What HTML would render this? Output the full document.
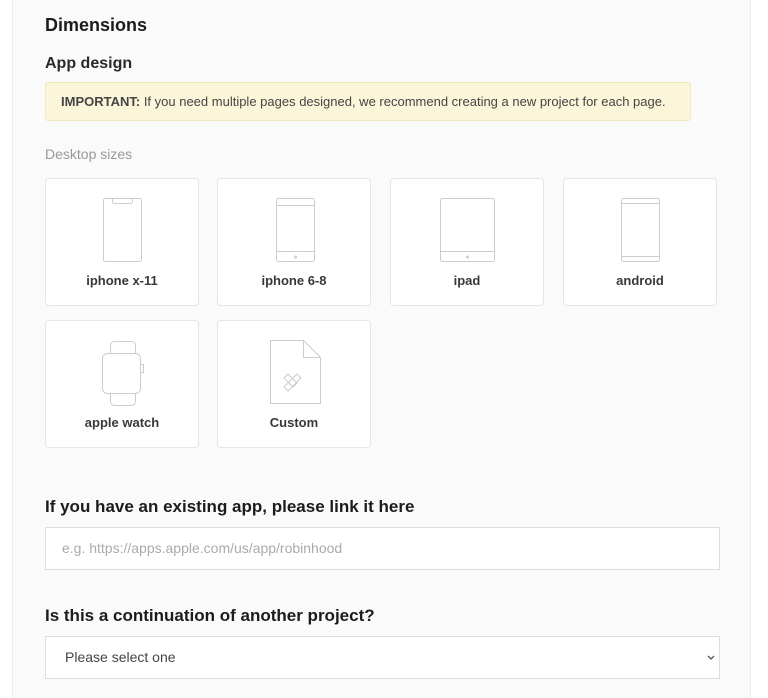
<!DOCTYPE html>
<html><head><style>
body{margin:0;width:768px;height:690px;overflow:hidden;background:#fff;font-family:"Liberation Sans",sans-serif;position:relative}
.wrap{position:absolute;left:12px;top:-2px;width:737px;height:700px;background:#fafafa;border-left:1px solid #ececec;border-right:1px solid #ececec}
.a{position:absolute}
.h1{left:45px;top:15px;font-size:18px;font-weight:bold;color:#1c1c1c}
.h2{left:45px;top:55px;font-size:16px;font-weight:bold;color:#2a2a2a}
.note{left:45px;top:82px;width:646px;height:39px;background:#fbf6d9;border:1px solid #f0e9bd;border-radius:3px;box-sizing:border-box;font-size:13px;color:#444;line-height:37px;padding-left:15px}
.ds{left:45px;top:146px;font-size:14px;color:#999}
.card{position:absolute;width:154px;height:128px;background:#fff;border:1px solid #e6e6e6;border-radius:4px;box-sizing:border-box}
.card .l{position:absolute;left:0;right:0;top:94px;text-align:center;font-size:13px;font-weight:bold;color:#383838}
.card svg{position:absolute;left:0;top:0}
.q{left:45px;font-size:17px;font-weight:bold;color:#1c1c1c}
.in{position:absolute;left:45px;width:675px;height:43px;background:#fff;border:1px solid #dedede;box-sizing:border-box;font-size:14px;line-height:41px}
</style></head><body>
<div class="wrap"></div>
<div class="a h1">Dimensions</div>
<div class="a h2">App design</div>
<div class="a note"><b>IMPORTANT:</b> If you need multiple pages designed, we recommend creating a new project for each page.</div>
<div class="a ds">Desktop sizes</div>

<div class="card" style="left:45px;top:178px"><svg width="153" height="100"><g fill="none" stroke="#ccc" stroke-width="1"><rect x="57.5" y="19.5" width="38" height="63" rx="2"/><path d="M66.5 19.5v3a2 2 0 0 0 2 2h16a2 2 0 0 0 2-2v-3"/></g></svg><div class="l">iphone x-11</div></div>
<div class="card" style="left:217px;top:178px"><svg width="153" height="100"><g fill="none" stroke="#ccc"><rect x="58.5" y="19.5" width="38" height="63" rx="2"/><path d="M58.5 26.5h38M58.5 72.5h38"/></g><circle cx="77.5" cy="78" r="1.5" fill="#ccc"/></svg><div class="l">iphone 6-8</div></div>
<div class="card" style="left:390px;top:178px"><svg width="153" height="100"><g fill="none" stroke="#ccc"><rect x="49.5" y="19.5" width="54" height="63" rx="2"/><path d="M49.5 72.5h54"/></g><circle cx="76.5" cy="78" r="1.5" fill="#ccc"/></svg><div class="l">ipad</div></div>
<div class="card" style="left:563px;top:178px"><svg width="153" height="100"><g fill="none" stroke="#ccc"><rect x="57.5" y="19.5" width="38" height="63" rx="2"/><path d="M57.5 24.5h38M57.5 77.5h38"/></g></svg><div class="l">android</div></div>
<div class="card" style="left:45px;top:320px"><svg width="153" height="100"><g fill="none" stroke="#ccc"><path d="M64.5 32.5v-8a4 4 0 0 1 4-4h17a4 4 0 0 1 4 4v8M64.5 72.5v8a4 4 0 0 0 4 4h17a4 4 0 0 0 4-4v-8"/><rect x="56.5" y="32.5" width="38" height="40" rx="5"/><rect x="94.5" y="43.5" width="3" height="8"/></g></svg><div class="l">apple watch</div></div>
<div class="card" style="left:217px;top:320px"><svg width="153" height="100"><g fill="none" stroke="#ccc"><path d="M52.5 19.5h33l17 17v46h-50z M85.5 19.5v17h17"/><path d="M66 57l9 9 4-4-9-9z M79 53l-13 13 4 4 13-13z"/></g></svg><div class="l">Custom</div></div>

<div class="a q" style="top:497px">If you have an existing app, please link it here</div>
<div class="in" style="top:527px;color:#aaa;padding-left:16px">e.g. https://apps.apple.com/us/app/robinhood</div>
<div class="a q" style="top:606px">Is this a continuation of another project?</div>
<div class="in" style="top:636px;color:#444;padding-left:19px">Please select one<svg style="position:absolute;right:4px;top:18px" width="8" height="6"><path d="M1 1l3 3 3-3" fill="none" stroke="#555" stroke-width="1.3"/></svg></div>
</body></html>
